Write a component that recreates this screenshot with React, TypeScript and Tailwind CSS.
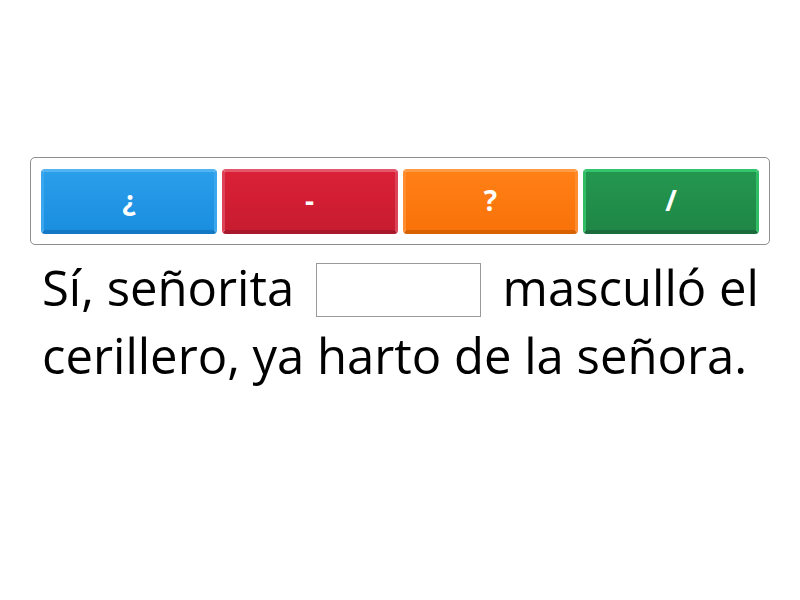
import React from "react";

const tiles = [
  {
    label: "¿",
    cls: "bg-[linear-gradient(#2b9eea,#1a8fe0)] border-t-[#52b3f2] border-x-[#3aa6ee] border-b-[#1479c4]",
  },
  {
    label: "-",
    cls: "bg-[linear-gradient(#da2036,#c81c30)] border-t-[#e4566a] border-x-[#dd4356] border-b-[#a8172a]",
  },
  {
    label: "?",
    cls: "bg-[linear-gradient(#ff8016,#f9720a)] border-t-[#ff9a45] border-x-[#ff8d30] border-b-[#d96200]",
  },
  {
    label: "/",
    cls: "bg-[linear-gradient(#24974f,#1f8747)] border-t-[#34c46c] border-x-[#30bd66] border-b-[#1a6d3a]",
  },
];

export default function App() {
  return (
    <div
      className="w-[800px] h-[600px] bg-white pt-[157px] px-[30px]"
      style={{ fontFamily: '"Open Sans", "Noto Sans", sans-serif' }}
    >
      <div className="border border-[#8e8e8e] rounded-[5px] pt-[11px] pb-[10px] px-[10px] flex gap-[5px]">
        {tiles.map((t) => (
          <div
            key={t.label}
            className={`flex-1 h-[65px] rounded-[4px] border-t-[3px] border-x-[3px] border-b-[4px] flex items-center justify-center text-white font-bold text-[28px] leading-none pb-[3px] ${t.cls}`}
          >
            {t.label}
          </div>
        ))}
      </div>
      <p className="mt-[8px] pl-[12px] text-[49px] leading-[68px] text-black">
        Sí, señorita{" "}
        <span className="inline-block align-middle w-[165px] h-[54px] border border-[#9a9a9a] mx-[9px] -mt-[6px]"></span>{" "}
        masculló el cerillero, ya harto de la señora.
      </p>
    </div>
  );
}
